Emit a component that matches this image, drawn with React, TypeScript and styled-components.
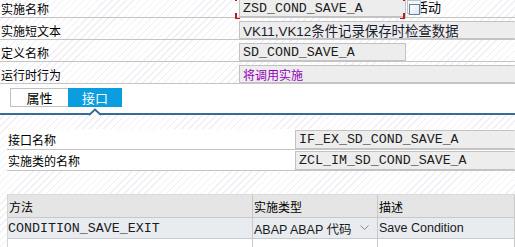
import React from 'react';
import styled, { createGlobalStyle } from 'styled-components';

const GlobalStyle = createGlobalStyle`
  html, body { margin: 0; padding: 0; background: #fff; overflow: hidden; }
  body {
    font-family: "Liberation Sans", "Noto Sans CJK SC", sans-serif;
    color: #000;
  }
  * { box-sizing: border-box; }
`;

const hatch = `repeating-linear-gradient(135deg, #ffffff 0px, #ffffff 4px, #f2eef5 4px, #f2eef5 5px)`;

const Page = styled.div`
  width: 515px;
  height: 247px;
  overflow: hidden;
  background: ${hatch};
`;

const TopForm = styled.div`
  display: flex;
  flex-direction: column;
  margin-top: -4px;
`;

const FormRow = styled.div`
  display: grid;
  grid-template-columns: 239px 1fr;
  height: 22px;
  padding-top: 3px;
  border-bottom: 1px solid #c4c4c4;
`;

const Label = styled.div<{ $indent?: number }>`
  display: flex;
  align-items: center;
  padding-left: ${(p) => p.$indent ?? 1}px;
  font-size: 12px;
  white-space: nowrap;
  color: #000;
`;

const FieldCell = styled.div`
  display: flex;
  align-items: flex-start;
  min-width: 0;
`;

const Field = styled.div<{ $w?: number; $mono?: boolean; $color?: string; $size?: number; $h?: number }>`
  position: relative;
  display: flex;
  align-items: center;
  flex: ${(p) => (p.$w ? `0 0 ${p.$w}px` : '1 0 auto')};
  width: ${(p) => (p.$w ? `${p.$w}px` : 'auto')};
  height: ${(p) => p.$h ?? 18}px;
  padding-left: 3px;
  border: 1px solid #c2c2c2;
  border-right-color: ${(p) => (p.$w ? '#c2c2c2' : 'transparent')};
  background: #ededed;
  white-space: nowrap;
  color: ${(p) => p.$color ?? (p.$mono ? '#1c1c1c' : '#000')};
  font-family: ${(p) =>
    p.$mono ? '"Liberation Mono", monospace' : '"Liberation Sans", "Noto Sans CJK SC", sans-serif'};
  font-size: ${(p) => p.$size ?? (p.$mono ? 13.3 : 12)}px;
`;

const Corner = styled.span<{ $pos: 'tl' | 'bl' | 'tr' | 'br' }>`
  position: absolute;
  width: 5px;
  height: 6px;
  border-color: #c21820;
  border-style: solid;
  border-width: 0;
  ${(p) => (p.$pos[0] === 't' ? 'top: -5px; border-top-width: 1px;' : 'bottom: -3px; border-bottom-width: 1px;')}
  ${(p) => (p.$pos[1] === 'l' ? 'left: -5px; border-left-width: 2px;' : 'right: 0px; border-right-width: 2px;')}
`;

const ActiveWrap = styled.div`
  position: relative;
  margin-left: 9px;
  font-size: 13px;
  line-height: 18px;
  white-space: nowrap;
`;

const CheckBox = styled.span`
  position: absolute;
  left: -8px;
  top: 1px;
  width: 14px;
  height: 14px;
  border: 1px solid #b9c3cf;
  background: #f4f6f9;
  &::after {
    content: '';
    position: absolute;
    left: 1px;
    top: 3px;
    width: 9px;
    height: 9px;
    border: 1px solid #6b7f96;
    background: linear-gradient(135deg, #ffffff, #dbe7f5);
  }
`;

const TabBar = styled.div`
  position: relative;
  display: flex;
  align-items: flex-start;
  height: 31px;
  padding: 4px 0 0 10px;
  background: #fff;
  border-bottom: 2px solid #38699a;
`;

const Tab = styled.div<{ $active?: boolean; $w: number }>`
  position: relative;
  display: flex;
  align-items: center;
  justify-content: center;
  width: ${(p) => p.$w}px;
  height: 19px;
  font-size: 13px;
  color: ${(p) => (p.$active ? '#fff' : '#000')};
  background: ${(p) => (p.$active ? '#0a9de0' : '#fff')};
  border: ${(p) => (p.$active ? 'none' : '1px solid #c0c0c0')};
  border-right: none;
`;

const Caret = styled.svg`
  position: absolute;
  left: 50%;
  margin-left: -6px;
  top: 20px;
`;

const Content = styled.div`
  padding: 14px 0 0 7px;
`;

const Panel = styled.div`
  display: flex;
  flex-direction: column;
`;

const PanelRow = styled.div`
  display: grid;
  grid-template-columns: 288px 1fr;
  height: 21px;
  padding-top: 1px;
  background: #fff;
  border-bottom: 1px solid #c4c4c4;
`;

const Table = styled.div`
  display: grid;
  grid-template-columns: 245px 125px 1fr;
  margin-top: 23px;
  border-top: 1px solid #dadada;
  border-left: 1px solid #d4d4d4;
`;

const Cell = styled.div<{ $kind: 'head' | 'data' | 'empty' }>`
  display: flex;
  align-items: center;
  justify-content: space-between;
  height: ${(p) => (p.$kind === 'head' ? 23 : 21)}px;
  padding: 0 8px 0 1px;
  border-right: 1px solid #c9c9c9;
  border-bottom: 1px solid #c9c9c9;
  background: ${(p) => (p.$kind === 'head' ? '#e5e5e5' : p.$kind === 'data' ? '#e8ecf0' : '#fff')};
  font-size: 12px;
  white-space: nowrap;
  overflow: hidden;
  color: #000;
`;

const Mono = styled.span`
  font-family: "Liberation Mono", monospace;
  font-size: 13.3px;
  color: #1c1c1c;
  margin-left: -1px;
`;

const SansText = styled.span`
  font-family: "Liberation Sans", "Noto Sans CJK SC", sans-serif;
  font-size: 12.5px;
  color: #1a1a1a;
`;

const Chevron = () => (
  <svg width="9" height="6" viewBox="0 0 9 6">
    <polyline points="0.5,0.5 4.5,4.5 8.5,0.5" fill="none" stroke="#8a8a8a" strokeWidth="1" />
  </svg>
);

export default function App() {
  return (
    <>
      <GlobalStyle />
      <Page>
        <TopForm>
          <FormRow>
            <Label>实施名称</Label>
            <FieldCell>
              <Field $w={167} $mono>
                ZSD_COND_SAVE_A
                <Corner $pos="tl" />
                <Corner $pos="bl" />
                <Corner $pos="tr" />
                <Corner $pos="br" />
              </Field>
              <ActiveWrap>
                活动
                <CheckBox />
              </ActiveWrap>
            </FieldCell>
          </FormRow>
          <FormRow>
            <Label>实施短文本</Label>
            <FieldCell>
              <Field $size={13.4} $color="#1b1b2e">VK11,VK12条件记录保存时检查数据</Field>
            </FieldCell>
          </FormRow>
          <FormRow>
            <Label>定义名称</Label>
            <FieldCell>
              <Field $w={167} $mono>SD_COND_SAVE_A</Field>
            </FieldCell>
          </FormRow>
          <FormRow>
            <Label>运行时行为</Label>
            <FieldCell>
              <Field $color="#9400b8" $size={12}>将调用实施</Field>
            </FieldCell>
          </FormRow>
        </TopForm>

        <TabBar>
          <Tab $w={58}>属性</Tab>
          <Tab $w={54} $active>
            接口
            <Caret width="12" height="8" viewBox="0 0 12 8">
              <polygon points="0,8 6,2 12,8" fill="#ffffff" />
              <polyline points="0,7 6,1.5 12,7" fill="none" stroke="#38699a" strokeWidth="2" />
            </Caret>
          </Tab>
        </TabBar>

        <Content>
          <Panel>
            <PanelRow>
              <Label>接口名称</Label>
              <FieldCell>
                <Field $mono $h={19}>IF_EX_SD_COND_SAVE_A</Field>
              </FieldCell>
            </PanelRow>
            <PanelRow>
              <Label>实施类的名称</Label>
              <FieldCell>
                <Field $mono $h={19}>ZCL_IM_SD_COND_SAVE_A</Field>
              </FieldCell>
            </PanelRow>
          </Panel>

          <Table>
            <Cell $kind="head">方法</Cell>
            <Cell $kind="head">实施类型</Cell>
            <Cell $kind="head">描述</Cell>
            <Cell $kind="data">
              <Mono>CONDITION_SAVE_EXIT</Mono>
            </Cell>
            <Cell $kind="data">
              <SansText>ABAP ABAP 代码</SansText>
              <Chevron />
            </Cell>
            <Cell $kind="data">
              <SansText>Save Condition</SansText>
            </Cell>
            <Cell $kind="empty" />
            <Cell $kind="empty" />
            <Cell $kind="empty" />
          </Table>
        </Content>
      </Page>
    </>
  );
}
